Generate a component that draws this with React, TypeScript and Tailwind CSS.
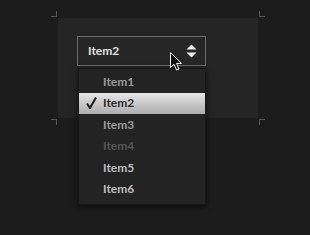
import React from 'react';

const items = ['Item1', 'Item2', 'Item3', 'Item4', 'Item5', 'Item6'];

function Corner({ className }: { className: string }) {
    return <div className={`absolute h-[6px] w-[6px] border-[#575757] ${className}`} />;
}

export default function App() {
    return (
        <div
            className="relative h-[235px] w-[310px] overflow-hidden bg-[#1c1c1c] pl-[58px] pt-[18px]"
            style={{ fontFamily: 'Lato, "Open Sans", sans-serif' }}
        >
            <div className="relative h-[100px] w-[200px] bg-[#242424] pl-[19px] pt-[18px]">
                <Corner className="left-[-7px] top-[-7px] border-b border-r" />
                <Corner className="right-[-7px] top-[-7px] border-b border-l" />
                <Corner className="bottom-[-7px] left-[-7px] border-r border-t" />
                <Corner className="bottom-[-7px] right-[-7px] border-l border-t" />

                <div className="relative">
                    <div className="flex h-[30px] w-[129px] items-center justify-between border border-[#6b6b6b] bg-[#262626] pl-[10px] pr-[8px]">
                        <span className="text-[12px] font-bold text-[#e2e2e2]">Item2</span>
                        <svg width="11" height="14" viewBox="0 0 11 14">
                            <path d="M5.5 0.5 L10.5 5.5 H0.5 Z" fill="#f2f2f2" />
                            <path d="M5.5 13.5 L10.5 8.5 H0.5 Z" fill="#f2f2f2" />
                        </svg>
                    </div>

                    <div className="absolute left-[1px] top-[32px] w-[128px] border border-[#161616] bg-[#232323] pb-[4px] pt-[2px] shadow-[0_2px_6px_rgba(0,0,0,0.6)]">
                        {items.map((item, i) => {
                            const selected = i === 1;
                            const color =
                                i === 3 ? 'text-[#555555]' : i >= 4 ? 'text-[#bdbdbd]' : 'text-[#9b9b9b]';
                            return (
                                <div
                                    key={item}
                                    className={`flex h-[21.5px] items-center ${
                                        selected ? 'bg-gradient-to-b from-[#e6e6e6] to-[#adadad]' : ''
                                    }`}
                                >
                                    <span className="flex w-[24px] justify-end pr-[6px]">
                                        {selected ? (
                                            <svg width="11" height="12" viewBox="0 0 11 12">
                                                <path
                                                    d="M1 6.5 L4 11 L10 0.5"
                                                    fill="none"
                                                    stroke="#1e1e1e"
                                                    strokeWidth="2"
                                                />
                                            </svg>
                                        ) : null}
                                    </span>
                                    <span
                                        className={`text-[12px] font-bold ${selected ? 'text-[#2a2a2a]' : color}`}
                                    >
                                        {item}
                                    </span>
                                </div>
                            );
                        })}
                    </div>
                </div>
            </div>

            <svg className="absolute left-[170px] top-[52px]" width="13" height="19" viewBox="0 0 13 19">
                <path
                    d="M0.5 0.5 L0.5 15.5 L4 12.2 L6.6 18 L9 17 L6.5 11.4 L11.5 11.4 Z"
                    fill="#111"
                    stroke="#f5f5f5"
                    strokeWidth="1"
                />
            </svg>
        </div>
    );
}
